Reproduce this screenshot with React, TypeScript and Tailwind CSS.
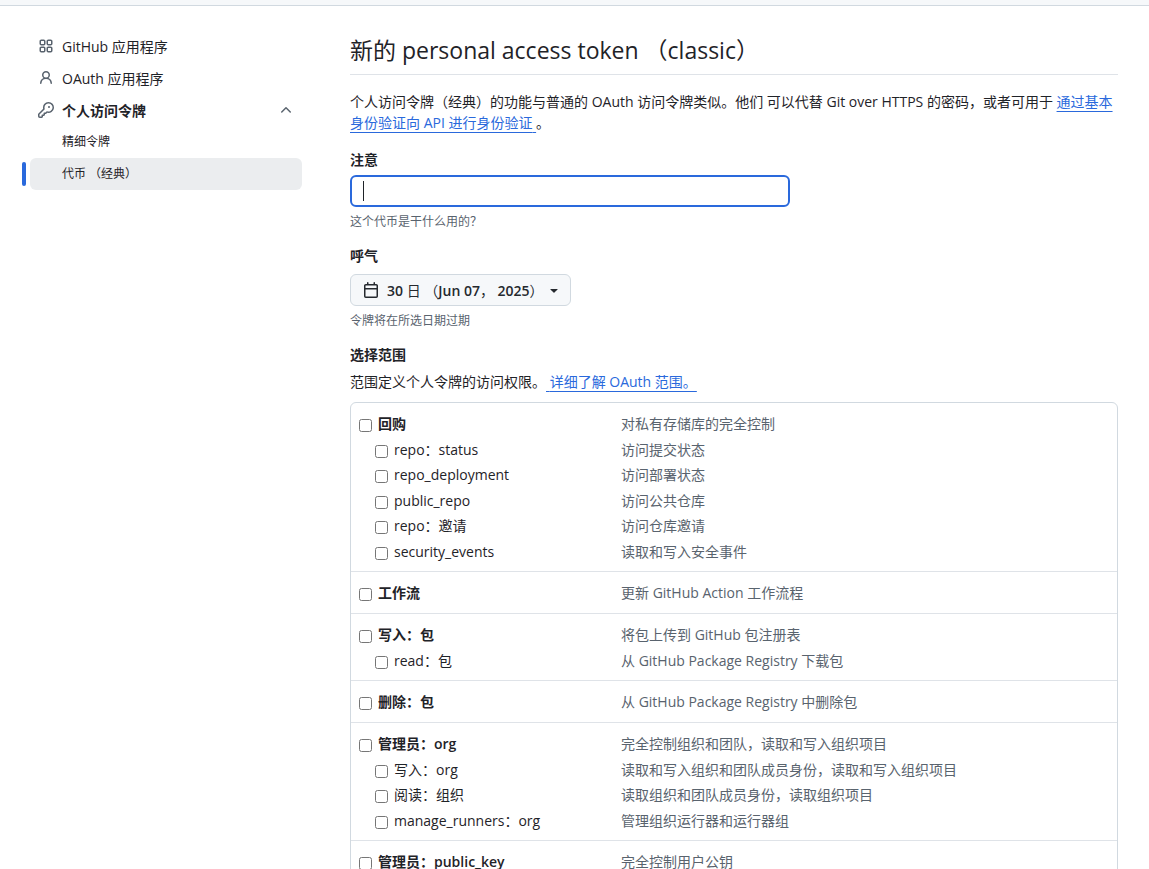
import React from "react";

const ICONS = {
  apps: "M1.5 3.25c0-.966.784-1.75 1.75-1.75h2.5c.966 0 1.75.784 1.75 1.75v2.5A1.75 1.75 0 0 1 5.75 7.5h-2.5A1.75 1.75 0 0 1 1.5 5.75Zm7 0c0-.966.784-1.75 1.75-1.75h2.5c.966 0 1.75.784 1.75 1.75v2.5a1.75 1.75 0 0 1-1.75 1.75h-2.5A1.75 1.75 0 0 1 8.5 5.75Zm-7 7c0-.966.784-1.75 1.75-1.75h2.5c.966 0 1.75.784 1.75 1.75v2.5a1.75 1.75 0 0 1-1.75 1.75h-2.5a1.75 1.75 0 0 1-1.75-1.75Zm7 0c0-.966.784-1.75 1.75-1.75h2.5c.966 0 1.75.784 1.75 1.75v2.5a1.75 1.75 0 0 1-1.75 1.75h-2.5a1.75 1.75 0 0 1-1.75-1.75ZM3.25 3a.25.25 0 0 0-.25.25v2.5c0 .138.112.25.25.25h2.5A.25.25 0 0 0 6 5.75v-2.5A.25.25 0 0 0 5.75 3Zm7 0a.25.25 0 0 0-.25.25v2.5c0 .138.112.25.25.25h2.5a.25.25 0 0 0 .25-.25v-2.5a.25.25 0 0 0-.25-.25Zm-7 7a.25.25 0 0 0-.25.25v2.5c0 .138.112.25.25.25h2.5a.25.25 0 0 0 .25-.25v-2.5a.25.25 0 0 0-.25-.25Zm7 0a.25.25 0 0 0-.25.25v2.5c0 .138.112.25.25.25h2.5a.25.25 0 0 0 .25-.25v-2.5a.25.25 0 0 0-.25-.25Z",
  person:
    "M10.561 8.073a6.005 6.005 0 0 1 3.432 5.142.75.75 0 1 1-1.498.07 4.5 4.5 0 0 0-8.99 0 .75.75 0 0 1-1.498-.07 6.004 6.004 0 0 1 3.431-5.142 3.999 3.999 0 1 1 5.123 0ZM10.5 5a2.5 2.5 0 1 0-5 0 2.5 2.5 0 0 0 5 0Z",
  key: "M10.5 0a5.499 5.499 0 1 1-1.288 10.848l-.932.932a.749.749 0 0 1-.53.22H7v.75a.749.749 0 0 1-.22.53l-.5.5a.749.749 0 0 1-.53.22H5v.75a.749.749 0 0 1-.22.53l-.5.5a.749.749 0 0 1-.53.22h-2A1.75 1.75 0 0 1 0 14.25v-2c0-.199.079-.389.22-.53l4.932-4.932A5.5 5.5 0 0 1 10.5 0Zm-4 5.5c-.001.431.069.86.205 1.269a.75.75 0 0 1-.181.768L1.5 12.56v1.69c0 .138.112.25.25.25h1.69l.06-.06v-1.19a.75.75 0 0 1 .75-.75h1.19l.06-.06v-1.19a.75.75 0 0 1 .75-.75h1.19l1.023-1.025a.75.75 0 0 1 .768-.18A4 4 0 1 0 6.5 5.5ZM11 6a1 1 0 1 1 0-2 1 1 0 0 1 0 2Z",
  chevronUp:
    "M3.22 10.53a.749.749 0 0 1 0-1.06l4.25-4.25a.749.749 0 0 1 1.06 0l4.25 4.25a.749.749 0 1 1-1.06 1.06L8 6.811 4.28 10.53a.749.749 0 0 1-1.06 0Z",
  calendar:
    "M4.75 0a.75.75 0 0 1 .75.75V2h5V.75a.75.75 0 0 1 1.5 0V2h1.25c.966 0 1.75.784 1.75 1.75v10.5A1.75 1.75 0 0 1 13.25 16H2.75A1.75 1.75 0 0 1 1 14.25V3.75C1 2.784 1.784 2 2.75 2H4V.75A.75.75 0 0 1 4.75 0ZM2.5 7.5v6.75c0 .138.112.25.25.25h10.5a.25.25 0 0 0 .25-.25V7.5Zm10.75-4H2.75a.25.25 0 0 0-.25.25V6h11V3.75a.25.25 0 0 0-.25-.25Z",
  triangleDown:
    "m4.427 7.427 3.396 3.396a.25.25 0 0 0 .354 0l3.396-3.396A.25.25 0 0 0 11.396 7H4.604a.25.25 0 0 0-.177.427Z",
};

function Icon({ name, className = "" }: { name: keyof typeof ICONS; className?: string }) {
  return (
    <svg viewBox="0 0 16 16" fill="currentColor" aria-hidden="true" className={`size-4 shrink-0 ${className}`}>
      <path d={ICONS[name]} />
    </svg>
  );
}

type Scope = { name: string; description: string };

const SCOPE_GROUPS: Scope[][] = [
  [
    { name: "回购", description: "对私有存储库的完全控制" },
    { name: "repo：status", description: "访问提交状态" },
    { name: "repo_deployment", description: "访问部署状态" },
    { name: "public_repo", description: "访问公共仓库" },
    { name: "repo：邀请", description: "访问仓库邀请" },
    { name: "security_events", description: "读取和写入安全事件" },
  ],
  [{ name: "工作流", description: "更新 GitHub Action 工作流程" }],
  [
    { name: "写入：包", description: "将包上传到 GitHub 包注册表" },
    { name: "read：包", description: "从 GitHub Package Registry 下载包" },
  ],
  [{ name: "删除：包", description: "从 GitHub Package Registry 中删除包" }],
  [
    { name: "管理员：org", description: "完全控制组织和团队，读取和写入组织项目" },
    { name: "写入：org", description: "读取和写入组织和团队成员身份，读取和写入组织项目" },
    { name: "阅读：组织", description: "读取组织和团队成员身份，读取组织项目" },
    { name: "manage_runners：org", description: "管理组织运行器和运行器组" },
  ],
  [{ name: "管理员：public_key", description: "完全控制用户公钥" }],
];

function ScopeGroup({ scopes }: { scopes: Scope[] }) {
  return (
    <ul className="border-b border-[#dfe3e8] px-2 pt-2.5 pb-[5px] last:border-b-0">
      {scopes.map((scope, i) => (
        <li key={scope.name} className="flex items-start odd:h-[26px] even:h-[25px]">
          <label className={`flex w-[262px] shrink-0 items-center gap-1.5 ${i === 0 ? "font-semibold" : "pl-4"}`}>
            <input type="checkbox" className="mt-1 size-[13px]" />
            {scope.name}
          </label>
          <span className="text-[#59636e]">{scope.description}</span>
        </li>
      ))}
    </ul>
  );
}

function Sidebar() {
  return (
    <nav aria-label="开发者设置" className="w-[272px] shrink-0">
      <ul>
        <li>
          <a href="#apps" className="flex h-8 items-center gap-2 px-2">
            <Icon name="apps" className="text-[#59636e]" />
            GitHub 应用程序
          </a>
        </li>
        <li>
          <a href="#oauth" className="flex h-8 items-center gap-2 px-2">
            <Icon name="person" className="text-[#59636e]" />
            OAuth 应用程序
          </a>
        </li>
        <li>
          <button type="button" aria-expanded="true" className="flex h-8 w-full items-center gap-2 px-2 font-semibold">
            <Icon name="key" className="text-[#59636e]" />
            <span className="flex-1 text-left">个人访问令牌</span>
            <Icon name="chevronUp" className="text-[#59636e]" />
          </button>
          <ul className="text-xs">
            <li>
              <a href="#fine-grained" className="flex h-8 items-center pl-8">
                精细令牌
              </a>
            </li>
            <li className="relative">
              <span className="absolute top-1 -left-2 h-6 w-1 rounded-md bg-[#2a69dc]" />
              <a href="#classic" aria-current="page" className="flex h-8 items-center rounded-md bg-[#ebedef] pl-8">
                代币 （经典）
              </a>
            </li>
          </ul>
        </li>
      </ul>
    </nav>
  );
}

export default function App() {
  return (
    <div
      lang="zh-CN"
      className="min-h-screen bg-white font-['Open_Sans','Noto_Sans_CJK_SC',sans-serif] text-sm leading-[21px] text-[#1f2328]"
    >
      <header className="h-1.5 border-b border-[#d1d9e0] bg-[#f6f8fa]" />
      <div className="flex gap-12 pt-6 pr-[31px] pl-[30px]">
        <Sidebar />
        <main className="min-w-0 flex-1">
          <h1 className="mb-4 border-b border-[#dfe3e8] pt-0.5 pb-1.5 text-[23px] leading-9">
            新的 personal access token （classic）
          </h1>
          <form onSubmit={(e) => e.preventDefault()}>
            <p>
              个人访问令牌（经典）的功能与普通的 OAuth 访问令牌类似。他们 可以代替 Git over HTTPS 的密码，或者可用于{" "}
              <a href="#basic-auth" className="text-[#2a69dc] underline underline-offset-4">
                通过基本身份验证向 API 进行身份验证{" "}
              </a>
              。
            </p>

            <label htmlFor="note" className="mt-4 mb-[5px] block font-semibold">
              注意
            </label>
            <div className="relative">
              <input
                id="note"
                type="text"
                className="block h-8 w-[440px] max-w-full rounded-md border-2 border-[#2a69dc] px-[11px] caret-transparent outline-none"
              />
              <span aria-hidden="true" className="pointer-events-none absolute top-1.5 left-[13px] h-5 w-px bg-[#1f2328]" />
            </div>
            <p className="mt-1.5 text-xs leading-[18px] text-[#59636e]">这个代币是干什么用的？</p>

            <h2 id="expiry" className="mt-3.5 mb-2 font-semibold">
              呼气
            </h2>
            <button
              type="button"
              aria-haspopup="menu"
              aria-describedby="expiry"
              className="flex h-8 items-center gap-0.5 rounded-md border border-[#d1d9e0] bg-[#f6f8fa] pr-2 pl-3 font-semibold text-[#25292e]"
            >
              <span className="flex items-center gap-2">
                <Icon name="calendar" />
                <span>
                  30 <span className="font-normal">日 （</span>Jun 07<span className="font-normal">，</span> 2025
                  <span className="font-normal">）</span>
                </span>
              </span>
              <Icon name="triangleDown" />
            </button>
            <p className="mt-1.5 text-xs leading-[18px] text-[#59636e]">令牌将在所选日期过期</p>

            <h2 className="mt-3.5 mb-1.5 font-semibold">选择范围</h2>
            <p className="mb-2.5">
              范围定义个人令牌的访问权限。
              <a href="#scopes" className="text-[#2a69dc] underline underline-offset-4">
                {" "}
                详细了解 OAuth 范围。
              </a>
            </p>
            <div className="rounded-md border border-[#d1d9e0]">
              {SCOPE_GROUPS.map((scopes) => (
                <ScopeGroup key={scopes[0].name} scopes={scopes} />
              ))}
            </div>
          </form>
        </main>
      </div>
    </div>
  );
}
